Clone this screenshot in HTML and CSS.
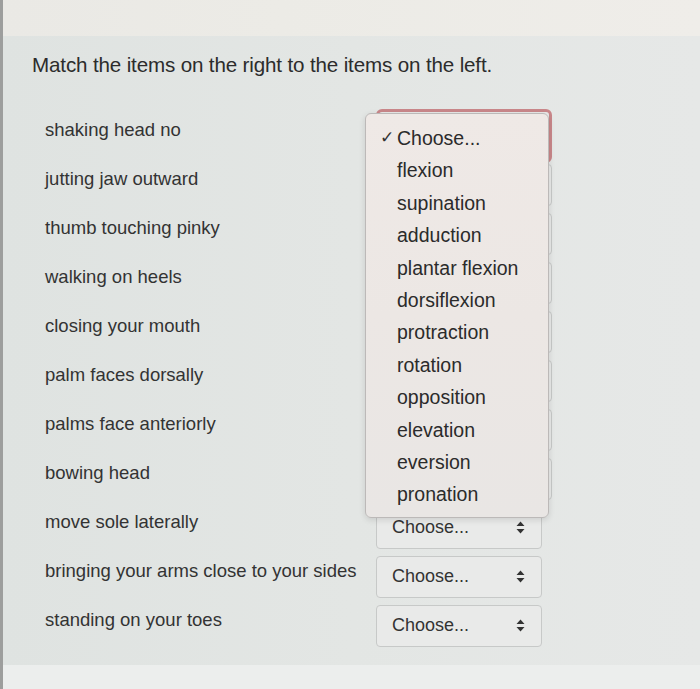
FILE: index.html
```html
<!DOCTYPE html>
<html lang="en">
<head>
<meta charset="utf-8">
<title>Match the items</title>
<link rel="stylesheet" href="styles.css">
</head>
<body>
<div class="screen">
  <div class="topband"></div>
  <div class="panel">
    <p class="title">Match the items on the right to the items on the left.</p>
    <div class="rows">
      <div class="row"><span class="label">shaking head no</span><div class="select focus"></div></div>
      <div class="row"><span class="label">jutting jaw outward</span><div class="select"></div></div>
      <div class="row"><span class="label">thumb touching pinky</span><div class="select"></div></div>
      <div class="row"><span class="label">walking on heels</span><div class="select"></div></div>
      <div class="row"><span class="label">closing your mouth</span><div class="select"></div></div>
      <div class="row"><span class="label">palm faces dorsally</span><div class="select"></div></div>
      <div class="row"><span class="label">palms face anteriorly</span><div class="select"></div></div>
      <div class="row"><span class="label">bowing head</span><div class="select"></div></div>
      <div class="row"><span class="label">move sole laterally</span><div class="select short"><span>Choose...</span><svg class="arrows" width="9" height="13" viewBox="0 0 9 13"><path d="M4.5 0.5 L8.5 5 L0.5 5 Z M4.5 12.5 L8.5 8 L0.5 8 Z" fill="#333"/></svg></div></div>
      <div class="row"><span class="label">bringing your arms close to your sides</span><div class="select short"><span>Choose...</span><svg class="arrows" width="9" height="13" viewBox="0 0 9 13"><path d="M4.5 0.5 L8.5 5 L0.5 5 Z M4.5 12.5 L8.5 8 L0.5 8 Z" fill="#333"/></svg></div></div>
      <div class="row"><span class="label">standing on your toes</span><div class="select short"><span>Choose...</span><svg class="arrows" width="9" height="13" viewBox="0 0 9 13"><path d="M4.5 0.5 L8.5 5 L0.5 5 Z M4.5 12.5 L8.5 8 L0.5 8 Z" fill="#333"/></svg></div></div>
    </div>
    <ul class="menu">
      <li class="checked"><span class="check">✓</span>Choose...</li>
      <li>flexion</li>
      <li>supination</li>
      <li>adduction</li>
      <li>plantar flexion</li>
      <li>dorsiflexion</li>
      <li>protraction</li>
      <li>rotation</li>
      <li>opposition</li>
      <li>elevation</li>
      <li>eversion</li>
      <li>pronation</li>
    </ul>
  </div>
  <div class="bottomband"></div>
</div>
</body>
</html>
```
FILE: styles.css
```css
html, body {
  margin: 0;
  padding: 0;
}
body {
  background: #e9ebe9;
  font-family: "Liberation Sans", Arial, sans-serif;
  color: #2f2f2f;
}
.screen {
  width: 700px;
  height: 689px;
  overflow: hidden;
  border-left: 3px solid #9d9e9d;
  box-sizing: border-box;
  background: #e9ebe9;
}
.topband {
  height: 36px;
  background: linear-gradient(90deg, #eae9e5 0%, #ecebe6 40%, #efede9 100%);
}
.panel {
  position: relative;
  background: linear-gradient(90deg, #dfe3e1 0%, #e3e6e4 50%, #e6e8e7 100%);
  padding: 17px 0 21px 0;
}
.title {
  margin: 0 0 28px 0;
  padding-left: 29px;
  font-size: 20.6px;
  line-height: 24px;
  color: #2c2c2c;
  letter-spacing: -0.15px;
}
.rows {
  display: flex;
  flex-direction: column;
}
.row {
  display: grid;
  grid-template-columns: 331px 176px;
  grid-template-rows: 49px;
  align-items: center;
  height: 49px;
  padding-left: 42px;
}
.label {
  font-size: 18.5px;
  line-height: 22px;
  color: #333;
  white-space: nowrap;
}
.select {
  height: 42px;
  margin-top: 12px;
  box-sizing: border-box;
  border: 1px solid #c7c9c8;
  border-radius: 4px;
  background: #e9eae9;
  display: flex;
  align-items: center;
  justify-content: space-between;
  padding: 0 16px 0 15px;
  font-size: 18px;
  color: #333;
}
.select.short {
  width: 166px;
}
.select.focus {
  height: 54px;
  border: 3px solid #c9878a;
  border-radius: 6px;
}
.arrows {
  display: block;
}
.menu {
  position: absolute;
  left: 362px;
  top: 77px;
  width: 184px;
  margin: 0;
  padding: 8px 0 6px 0;
  box-sizing: border-box;
  list-style: none;
  background: linear-gradient(180deg, #efe9e6 0%, #ece7e4 50%, #e9e6e4 100%);
  border: 1px solid #bcb9b8;
  border-radius: 6px;
  box-shadow: 0 2px 6px rgba(0,0,0,0.12);
}
.menu li {
  height: 32.4px;
  line-height: 32.4px;
  padding-left: 31px;
  font-size: 19.5px;
  color: #2b2b2b;
  position: relative;
  white-space: nowrap;
}
.menu .check {
  position: absolute;
  left: 14px;
  top: 0;
  font-size: 17px;
  color: #333;
}
.bottomband {
  height: 30px;
  background: #eceeed;
}
```
